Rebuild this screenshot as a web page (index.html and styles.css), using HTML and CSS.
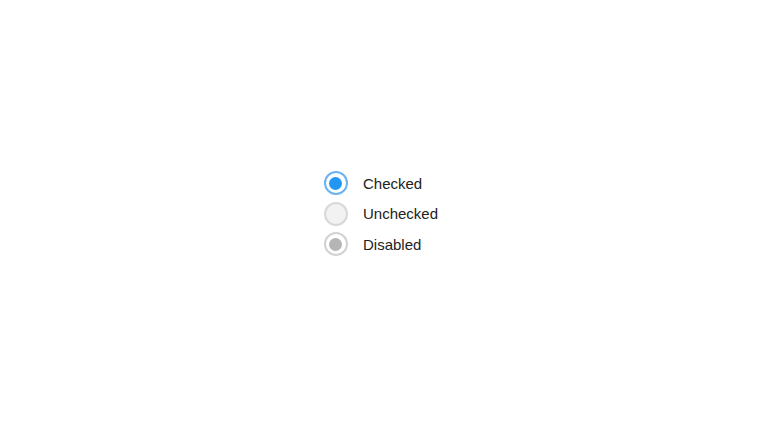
FILE: index.html
```html
<!DOCTYPE html>
<html>
<head>
<meta charset="utf-8">
<link rel="stylesheet" href="styles.css">
</head>
<body>
<div class="stage">
  <div class="group">
    <label class="row">
      <span class="radio checked"><span class="dot"></span></span>
      <span class="text">Checked</span>
    </label>
    <label class="row">
      <span class="radio unchecked"></span>
      <span class="text">Unchecked</span>
    </label>
    <label class="row">
      <span class="radio disabled"><span class="dot"></span></span>
      <span class="text">Disabled</span>
    </label>
  </div>
</div>
</body>
</html>
```
FILE: styles.css
```css
html, body {
  margin: 0;
  padding: 0;
  background: #ffffff;
}
.stage {
  width: 768px;
  height: 432px;
  display: flex;
  align-items: center;
  justify-content: center;
  box-sizing: border-box;
  padding-bottom: 5px;
  padding-right: 6px;
}
.group {
  display: flex;
  flex-direction: column;
  gap: 6.5px;
}
.row {
  display: flex;
  align-items: center;
  gap: 15px;
  height: 24px;
}
.radio {
  box-sizing: border-box;
  width: 24px;
  height: 24px;
  border-radius: 50%;
  display: flex;
  align-items: center;
  justify-content: center;
  flex: none;
}
.radio.checked {
  border: 2px solid #6ab4f5;
  background: #ffffff;
}
.radio.checked .dot {
  width: 13px;
  height: 13px;
  border-radius: 50%;
  background: #2196f3;
}
.radio.unchecked {
  border: 2px solid #d8d8d8;
  background: #f2f2f2;
}
.radio.disabled {
  border: 2px solid #d2d2d2;
  background: #ffffff;
}
.radio.disabled .dot {
  width: 13px;
  height: 13px;
  border-radius: 50%;
  background: #b5b5b5;
}
.text {
  font-family: "Liberation Sans", Arial, sans-serif;
  font-size: 15px;
  color: #222222;
}
```
